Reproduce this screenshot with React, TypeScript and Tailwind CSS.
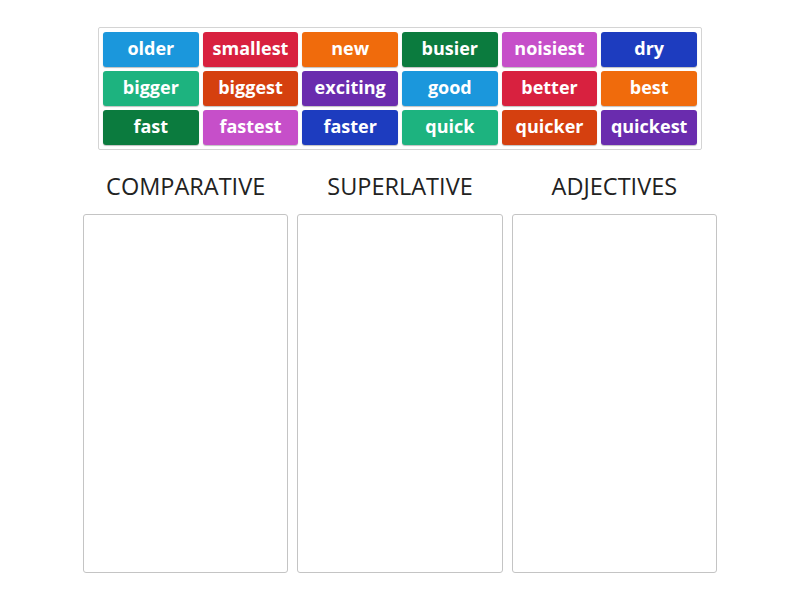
import React from 'react'

const WORDS: { text: string; color: string }[] = [
  { text: 'older', color: 'bg-[#1b97dc]' },
  { text: 'smallest', color: 'bg-[#d8213f]' },
  { text: 'new', color: 'bg-[#f06b0c]' },
  { text: 'busier', color: 'bg-[#0b7b3e]' },
  { text: 'noisiest', color: 'bg-[#c64fc9]' },
  { text: 'dry', color: 'bg-[#1d3cbf]' },
  { text: 'bigger', color: 'bg-[#1db37f]' },
  { text: 'biggest', color: 'bg-[#d5400f]' },
  { text: 'exciting', color: 'bg-[#6a2cae]' },
  { text: 'good', color: 'bg-[#1b97dc]' },
  { text: 'better', color: 'bg-[#d8213f]' },
  { text: 'best', color: 'bg-[#f06b0c]' },
  { text: 'fast', color: 'bg-[#0b7b3e]' },
  { text: 'fastest', color: 'bg-[#c64fc9]' },
  { text: 'faster', color: 'bg-[#1d3cbf]' },
  { text: 'quick', color: 'bg-[#1db37f]' },
  { text: 'quicker', color: 'bg-[#d5400f]' },
  { text: 'quickest', color: 'bg-[#6a2cae]' },
]

const GROUPS = ['COMPARATIVE', 'SUPERLATIVE', 'ADJECTIVES']

export default function App() {
  return (
    <div className="w-[800px] h-[600px] bg-white flex flex-col items-center pt-[27px] font-['Open_Sans',sans-serif]">
      {/* word bank */}
      <div className="w-[604px] border border-[#d4d4d4] rounded-[2px] p-[4px] grid grid-cols-6 gap-x-[4px] gap-y-[4px]">
        {WORDS.map((w) => (
          <div
            key={w.text}
            className={`${w.color} h-[35px] rounded-[3px] flex items-center justify-center pb-[3px] text-white text-[18px] font-bold leading-none shadow-[0_1px_1px_rgba(0,0,0,0.25)]`}
          >
            {w.text}
          </div>
        ))}
      </div>

      {/* drop columns */}
      <div className="w-[634px] mt-[20px] grid grid-cols-3 gap-x-[9px]">
        {GROUPS.map((g) => (
          <div key={g} className="flex flex-col">
            <div className="h-[44px] flex items-start justify-center text-[23.5px] text-[#222] leading-[32px]">
              {g}
            </div>
            <div className="h-[359px] border border-[#c4c4c4] rounded-[3px]" />
          </div>
        ))}
      </div>
    </div>
  )
}
